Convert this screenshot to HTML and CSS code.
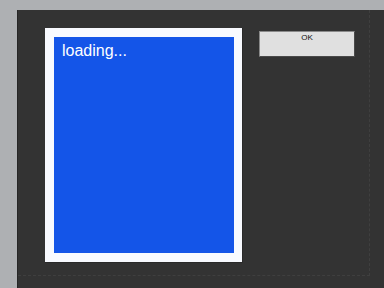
FILE: index.html
```html
<!DOCTYPE html>
<html>
<head>
<meta charset="utf-8">
<link rel="stylesheet" href="styles.css">
</head>
<body>
<div class="panel">
  <div class="content">
    <div class="frame">
      <div class="screen">loading...</div>
    </div>
    <button class="ok">OK</button>
  </div>
</div>
</body>
</html>
```
FILE: styles.css
```css
html, body {
  margin: 0;
  padding: 0;
  width: 384px;
  height: 288px;
  overflow: hidden;
  background: #aeb0b3;
}
.panel {
  margin: 10px 0 0 17px;
  height: 278px;
  background: #333333;
  border-left: 1px solid #262626;
  box-sizing: border-box;
}
.content {
  display: flex;
  align-items: flex-start;
  gap: 16px;
  width: 352px;
  height: 266px;
  padding: 18px 0 0 27px;
  box-sizing: border-box;
  border-right: 1px dashed #3f3f3f;
  border-bottom: 1px dashed #3f3f3f;
}
.frame {
  width: 198px;
  height: 235px;
  padding: 9px 8px 9px 9px;
  box-sizing: border-box;
  background: #f8faff;
  border-right: 1px solid #2a2a2a;
  border-bottom: 1px solid #2a2a2a;
}
.screen {
  height: 100%;
  background: #1455e8;
  color: #ffffff;
  font-family: "Liberation Sans", Arial, sans-serif;
  font-size: 16px;
  padding: 5px 0 0 8px;
  box-sizing: border-box;
}
.ok {
  margin-top: 3px;
  width: 96px;
  height: 26px;
  background: #e0e0e0;
  border: 1px solid #4a4a4a;
  border-top-color: #8a8a8a;
  border-left-color: #8a8a8a;
  font-family: "Liberation Sans", Arial, sans-serif;
  font-size: 8px;
  color: #111;
  display: flex;
  justify-content: center;
  align-items: flex-start;
  padding: 1px 0 0;
  box-sizing: border-box;
}
```
